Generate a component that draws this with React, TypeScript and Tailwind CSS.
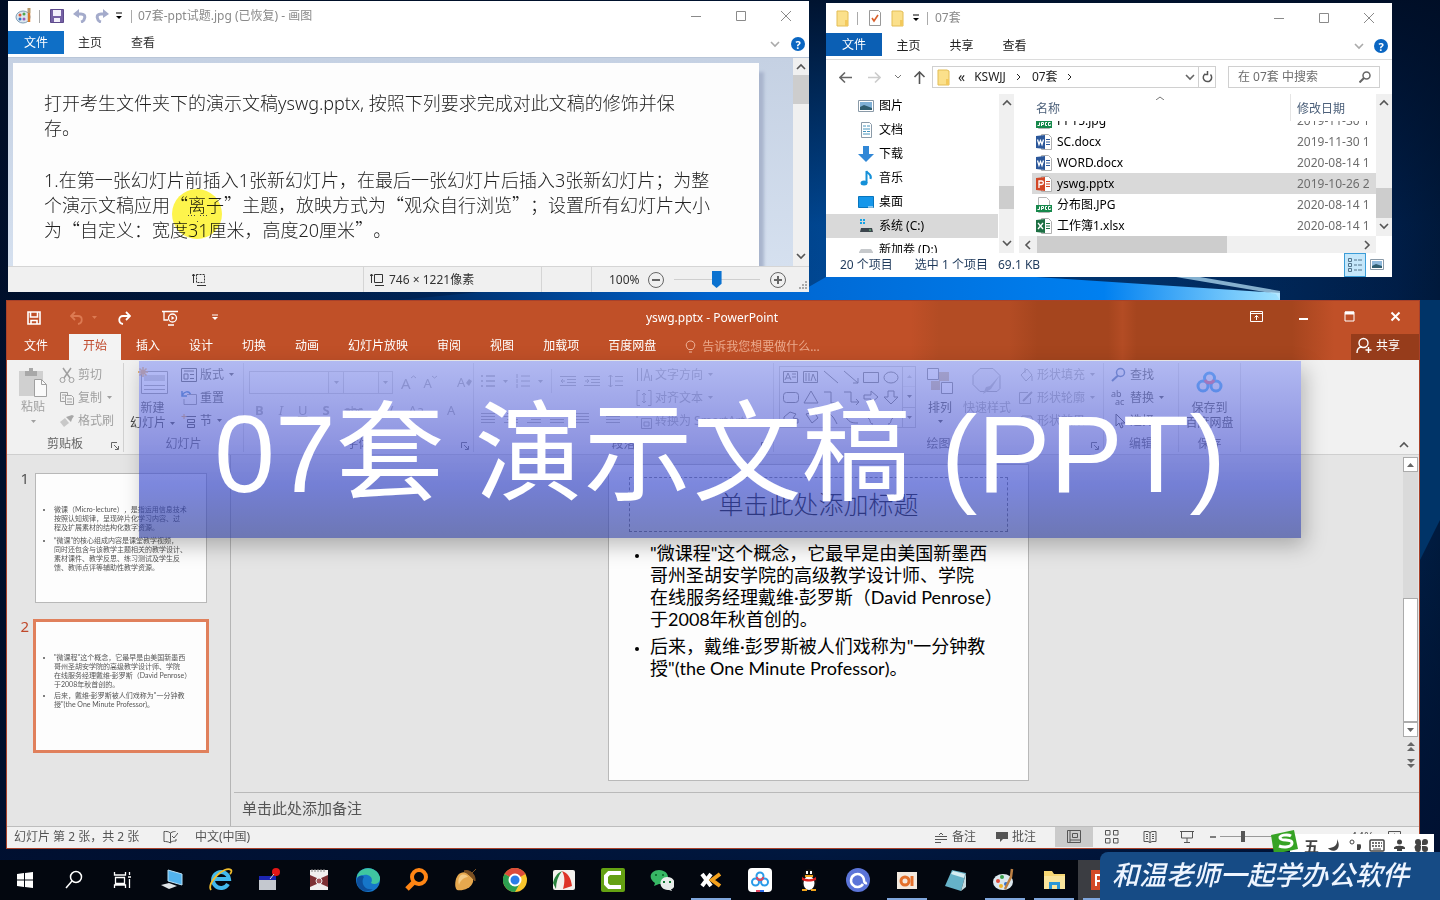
import { useState, type ReactNode } from "react";

const UI = "font-['Noto_Sans','Noto_Sans_CJK_SC',sans-serif]";

/* ---------- shared bits ---------- */

function Svg({ w = 16, h, box, children, className = "" }: { w?: number; h?: number; box?: string; children: ReactNode; className?: string }) {
    return (
        <svg width={w} height={h ?? w} viewBox={box ?? `0 0 ${w} ${h ?? w}`} fill="none" stroke="currentColor" className={`shrink-0 ${className}`} aria-hidden="true">
            {children}
        </svg>
    );
}

function Chevron({ dir = "down", className = "" }: { dir?: "up" | "down" | "left" | "right"; className?: string }) {
    const d = { up: "M1 6 5 2l4 4", down: "M1 3l4 4 4-4", left: "M7 1 3 5l4 4", right: "M3 1l4 4-4 4" }[dir];
    return <Svg w={10} className={className}><path d={d} strokeWidth="1.6" /></Svg>;
}

function Caret({ className = "" }: { className?: string }) {
    return <Svg w={5} h={3} className={className}><path d="M0 0h5L2.5 3z" fill="currentColor" stroke="none" /></Svg>;
}

function QuickMenu() {
    return <Svg w={8} h={8} className="text-black"><path d="M1 1h6" /><path d="M1 4h6L4 7z" fill="currentColor" stroke="none" /></Svg>;
}

function WindowButtons({ gap }: { gap: string }) {
    return (
        <div className={`flex items-center text-[#8a8a8a] ${gap}`}>
            <button type="button" aria-label="最小化"><Svg w={12}><path d="M1 6.5h10" /></Svg></button>
            <button type="button" aria-label="最大化"><Svg w={12}><path d="M1.500 1.500h9v9h-9z" /></Svg></button>
            <button type="button" aria-label="关闭"><Svg w={12}><path d="M1 1l10 10M11 1 1 11" /></Svg></button>
        </div>
    );
}

function Help() {
    return <button type="button" aria-label="帮助" className="flex size-[14px] items-center justify-center rounded-full bg-[#0a66c2] text-[11px] font-bold leading-none text-white">?</button>;
}

function Folder({ w = 13 }: { w?: number }) {
    return (
        <Svg w={w} h={17} box="0 0 13 17">
            <path d="M1 1h9l2 1v14H1z" fill="#fbe08b" stroke="#e3bd55" />
            <path d="M9 10h3v6H9z" fill="#f3c95c" stroke="none" />
        </Svg>
    );
}

// full-width quotes need the CJK face
function CQ({ children }: { children: ReactNode }) {
    return <span className="font-['Noto_Sans_CJK_SC',sans-serif] leading-none">{children}</span>;
}

/* ---------- Paint ---------- */

function PaintWindow() {
    const [zoom, setZoom] = useState(50);
    return (
        <section className="absolute left-2 top-px flex h-[291px] w-[801px] flex-col bg-white text-xs text-[#333]">
            <header className="flex h-[30px] shrink-0 items-center pl-[7px] pr-[17px]">
                <Svg w={18}>
                    <ellipse cx="8" cy="10" rx="7" ry="6" fill="#dbe6ee" stroke="#7d9cb5" />
                    <circle cx="5" cy="8" r="1.500" fill="#e05a3a" stroke="none" /><circle cx="9" cy="7" r="1.500" fill="#4fa64a" stroke="none" />
                    <circle cx="5" cy="12" r="1.500" fill="#3577c8" stroke="none" /><circle cx="9" cy="12" r="1.500" fill="#9d5bb5" stroke="none" />
                    <path d="M14 6v9" stroke="#d97b2b" strokeWidth="2.500" /><path d="M14 6V1" stroke="#b99a6d" strokeWidth="3" />
                </Svg>
                <span className="ml-[6px] h-[13px] w-px bg-[#aaa]" />
                <button type="button" aria-label="保存" className="ml-[10px]">
                    <Svg w={14}><path d="M.5.5h13v13H.5z" fill="#7561a4" stroke="#5d4a8c" /><path d="M3 1h8v6H3zM4 9h6v4H4z" fill="#f2effa" stroke="none" /></Svg>
                </button>
                <button type="button" aria-label="撤消" className="ml-[9px] text-[#a4abcb]"><Svg w={14}><path d="M3 5h5c6 0 4 7 0 8" strokeWidth="3" /><path d="M6 0v9L0 5z" fill="currentColor" stroke="none" /></Svg></button>
                <button type="button" aria-label="重做" className="ml-2 text-[#a4abcb]"><Svg w={14}><path d="M11 5H6c-6 0-4 7 0 8" strokeWidth="3" /><path d="M8 0v9l6-4z" fill="currentColor" stroke="none" /></Svg></button>
                <span className="ml-[6px]"><QuickMenu /></span>
                <span className="ml-2 mr-[6px] h-[13px] w-px bg-[#aaa]" />
                <h1 className="text-[#8a8a8a]">07套-ppt试题.jpg (已恢复) - 画图</h1>
                <div className="ml-auto"><WindowButtons gap="gap-[33px]" /></div>
            </header>
            <nav className="flex h-[26px] shrink-0 items-start">
                <button type="button" className="h-[23px] w-14 bg-[#0f6fc6] text-white">文件</button>
                <button type="button" className="h-6 w-[52px]">主页</button>
                <button type="button" className="h-6 w-[54px]">查看</button>
                <div className="ml-auto flex h-[26px] items-center gap-[11px] pr-1">
                    <Chevron className="text-[#aaa]" /><Help />
                </div>
            </nav>
            <div className="flex min-h-0 flex-1 border-t border-[#b9c6d8]">
                <div className="flex flex-1 overflow-hidden bg-gradient-to-b from-[#c5d1e3] to-[#d5e0ef] pl-[5px] pt-[5px]">
                    <div className="relative w-[746px] bg-[#fdfdfd] px-[31px] pt-7 text-[18px] font-light leading-[25px] text-[#222] whitespace-nowrap shadow-[5px_9px_3px_#a9b5cd] [text-spacing-trim:space-all]">
                        <p>打开考生文件夹下的演示文稿yswg.pptx, 按照下列要求完成对此文稿的修饰并保</p>
                        <p>存。</p>
                        <p className="mt-[27px]">1.在第一张幻灯片前插入1张新幻灯片，在最后一张幻灯片后插入3张新幻灯片；为整</p>
                        <p>个演示文稿应用<CQ>“</CQ>离子<CQ>”</CQ>主题，放映方式为<CQ>“</CQ>观众自行浏览<CQ>”</CQ>；设置所有幻灯片大小</p>
                        <p>为<CQ>“</CQ>自定义：宽度31厘米，高度20厘米<CQ>”</CQ>。</p>
                        {/* pointer highlight */}
                        <span className="absolute left-[159px] top-[126px] size-[50px] rounded-full bg-[#fff200] opacity-70 mix-blend-multiply" />
                        <Svg w={19} h={22} className="absolute left-[175px] top-[141px] text-[#444]"><path d="M0 11.500h7m5 0h7M9.500 0v3m0 14v3" strokeDasharray="1 2" /></Svg>
                    </div>
                </div>
                <div className="flex w-4 flex-col items-center bg-[#f0f0f0] py-[5px] text-[#555]">
                    <Chevron dir="up" />
                    <span className="mt-0.5 h-[29px] w-full bg-[#cdcdcd]" />
                    <Chevron className="mt-auto" />
                </div>
            </div>
            <footer className="flex h-[26px] shrink-0 items-center border-t border-[#d5d5d5] bg-[#f0f0f0]">
                <div className="flex w-[355px] justify-center pl-[26px]">
                    <Svg w={14}><path d="M1.500 1v9M0 3l1.500-2L3 3M5 12.500h9" /><path d="M4.500 1.500h8v8h-8z" strokeDasharray="2 1" /></Svg>
                </div>
                <div className="flex h-full w-[179px] items-center gap-[5px] border-x border-[#d5d5d5] pl-[6px]">
                    <Svg w={14}><path d="M1.500 1v9M0 3l1.500-2L3 3M5 12.500h9M4.500 1.500h8v8h-8z" /></Svg>746 × 1221像素
                </div>
                <div className="h-full w-[50px] border-r border-[#d5d5d5]" />
                <span className="ml-[17px]">100%</span>
                <button type="button" aria-label="缩小" className="ml-2 text-[#666]"><Svg w={16}><circle cx="8" cy="8" r="7.500" /><path d="M4 8h8" strokeWidth="2" /></Svg></button>
                <input type="range" aria-label="缩放" value={zoom} onChange={e => setZoom(Number(e.target.value))} className="ml-[10px] h-[17px] w-[86px] appearance-none bg-[linear-gradient(#cfcfcf,#cfcfcf)] bg-[length:100%_1px] bg-center bg-no-repeat [&::-webkit-slider-thumb]:h-[17px] [&::-webkit-slider-thumb]:w-[10px] [&::-webkit-slider-thumb]:appearance-none [&::-webkit-slider-thumb]:bg-[#0b72d0] [&::-webkit-slider-thumb]:[clip-path:polygon(0_0,100%_0,100%_75%,50%_100%,0_75%)]" />
                <button type="button" aria-label="放大" className="ml-[10px] text-[#666]"><Svg w={16}><circle cx="8" cy="8" r="7.500" /><path d="M4 8h8M8 4v8" strokeWidth="2" /></Svg></button>
                <Svg w={9} className="ml-auto mr-0.5 mt-3 text-[#aaa]"><path d="M7 1h2M4 4h2m1 0h2M1 7h2m1 0h2m1 0h2" strokeWidth="2" /></Svg>
            </footer>
        </section>
    );
}

/* ---------- Explorer ---------- */

const places: { name: string; icon: ReactNode }[] = [
    { name: "图片", icon: <><path d="M.5 2.500h15v11H.5z" fill="#fff" stroke="#8a9aa8" /><path d="M2 4h12v8H2z" fill="#7fb0d6" stroke="none" /><path d="M2 12V9l4-2 8 3v2z" fill="#2f5d70" stroke="none" /></> },
    { name: "文档", icon: <><path d="M3.500.500h8l2 2v13h-10z" fill="#fff" stroke="#8a9aa8" /><path d="M5 4h3m1 0h3M5 7h7M5 9.500h3m1 0h3M5 12h7" stroke="#4694bd" /></> },
    { name: "下载", icon: <path d="M5 0h6v8h5l-8 8-8-8h5z" fill="#3187d6" stroke="none" /> },
    { name: "音乐", icon: <><path d="M8.500 13V1c1 3 6 3 4 8" stroke="#1590d8" strokeWidth="2" /><ellipse cx="6" cy="13" rx="3.500" ry="2.500" fill="#1590d8" stroke="none" /></> },
    { name: "桌面", icon: <><path d="M.5 2.500h15v11H.5z" fill="#1496ea" stroke="#0875bd" /><path d="M10 13h5" stroke="#fff" /></> },
    { name: "系统 (C:)", icon: <><path d="M2 1h2v2H2zM5 1h2v2H5zM2 4h2v2H2zM5 4h2v2H5z" fill="#16a3e5" stroke="none" /><path d="M3 10h11l1 4H2z" fill="#3c454d" stroke="none" /><path d="M11 12h2" stroke="#6fe08d" /></> },
    { name: "新加卷 (D:)", icon: <path d="M3 7h10l2 3v4H1v-4z" fill="#c6c9cc" stroke="none" /> },
];

type FileKind = "doc" | "ppt" | "jpg" | "xls";

const files: { name: string; date: string; kind: FileKind }[] = [
    { name: "PPT5.jpg", date: "2019-11-30 1", kind: "jpg" },
    { name: "SC.docx", date: "2019-11-30 1", kind: "doc" },
    { name: "WORD.docx", date: "2020-08-14 1", kind: "doc" },
    { name: "yswg.pptx", date: "2019-10-26 2", kind: "ppt" },
    { name: "分布图.JPG", date: "2020-08-14 1", kind: "jpg" },
    { name: "工作簿1.xlsx", date: "2020-08-14 1", kind: "xls" },
];

function FileIcon({ kind }: { kind: FileKind }) {
    if (kind === "jpg") {
        return <Svg w={16}><path d="M2.500.500h8l3 3v12h-11z" fill="#fff" stroke="#b5b5b5" /><path d="M0 8h16v7H0z" fill="#16884b" stroke="none" /><path d="M3.500 9.500v3H1.500M5.500 13V9.500h2v2h-2M11 9.500H9.500v3H11m3.500-3h-2v3h2v-1" stroke="#fff" /></Svg>;
    }
    const color = { doc: "#2b579a", ppt: "#d24726", xls: "#1d7044" }[kind];
    const mark = { doc: "M1.500 5.500l1.500 5 1.500-4 1.500 4 1.500-5", ppt: "M3 12V5h2.500c2.500 0 2.500 3.500 0 3.500H3", xls: "M2 5l5 6M7 5l-5 6" }[kind];
    return (
        <Svg w={16}>
            <path d="M5.500.500h7l3 3v12h-10z" fill="#fff" stroke="#b0b0b0" />
            <path d="M10 5.500h4M10 8h4m-4 2.500h4" stroke={color} />
            <path d="M0 2l9-1v14l-9-1z" fill={color} stroke="none" /><path d={mark} stroke="#fff" strokeWidth="1.300" />
        </Svg>
    );
}

function ExplorerWindow() {
    const [query, setQuery] = useState("");
    return (
        <section className="absolute left-[826px] top-[3px] flex h-[274px] w-[566px] flex-col bg-white text-xs text-[#222]">
            <header className="flex h-[30px] shrink-0 items-center pl-[10px] pr-[17px]">
                <Folder />
                <span className="ml-2 mr-[11px] h-[13px] w-px bg-[#aaa]" />
                <Svg w={12} h={16}><path d="M.5.500h9l2 2v13H.5z" fill="#fff" stroke="#999" /><path d="M3 8l2 3 4-6" stroke="#d9602b" strokeWidth="1.600" /></Svg>
                <span className="ml-[10px] mr-2"><Folder /></span>
                <QuickMenu />
                <span className="mx-[7px] h-[13px] w-px bg-[#aaa]" />
                <h1 className="text-[#8a8a8a]">07套</h1>
                <div className="ml-auto"><WindowButtons gap="gap-[33px]" /></div>
            </header>
            <nav className="flex h-[27px] shrink-0 items-start border-b border-[#dcdcdc]">
                <button type="button" className="h-[23px] w-14 bg-[#0b5fb4] text-white">文件</button>
                <button type="button" className="h-[25px] w-[53px]">主页</button>
                <button type="button" className="h-[25px] w-[53px]">共享</button>
                <button type="button" className="h-[25px] w-[53px]">查看</button>
                <div className="ml-auto flex h-[26px] items-center gap-[10px] pr-1">
                    <Chevron className="text-[#aaa]" /><Help />
                </div>
            </nav>
            <div className="flex shrink-0 items-center py-[6px] pl-[13px] pr-3">
                <button type="button" aria-label="后退"><Svg w={13} className="text-[#666]"><path d="M13 6.500H1.500M6 1.500l-5 5 5 5" strokeWidth="1.600" /></Svg></button>
                <button type="button" aria-label="前进" className="ml-4"><Svg w={13} className="text-[#ccc]"><path d="M0 6.500h11.500M7 1.500l5 5-5 5" strokeWidth="1.600" /></Svg></button>
                <Svg w={6} className="ml-[14px] text-[#777]"><path d="M0 1l3 3 3-3" /></Svg>
                <button type="button" aria-label="向上" className="ml-3"><Svg w={13} className="text-[#555]"><path d="M6.500 13V1.500M1.500 6l5-5 5 5" strokeWidth="1.600" /></Svg></button>
                <div className="ml-[6px] flex h-[22px] min-w-0 flex-1 items-center border border-[#d0d0d0] pl-1">
                    <Folder />
                    <span className="ml-2 text-sm leading-none">«</span>
                    <a href="#kswjj" className="ml-[9px]">KSWJJ</a>
                    <Svg w={6} className="mx-[10px]"><path d="M1 0l3 3-3 3" /></Svg>
                    <a href="#07">07套</a>
                    <Svg w={6} className="ml-[9px]"><path d="M1 0l3 3-3 3" /></Svg>
                    <Chevron className="ml-auto text-[#666]" />
                    <button type="button" aria-label="刷新" className="ml-[3px] flex h-full w-[17px] items-center justify-center border-l border-[#d0d0d0] text-[#555]">
                        <Svg w={11} h={12}><path d="M3 3a4.200 4.200 0 1 0 5.500.500" strokeWidth="1.500" /><path d="M3.500 0v3.500H0" strokeWidth="1.500" transform="translate(2)" /></Svg>
                    </button>
                </div>
                <label className="ml-3 flex h-[22px] w-[152px] items-center border border-[#d0d0d0] pl-[9px] pr-2">
                    <input value={query} onChange={e => setQuery(e.target.value)} placeholder="在 07套 中搜索" aria-label="搜索" className="w-full min-w-0 bg-transparent outline-none placeholder:text-[#6d6d6d]" />
                    <Svg w={12} className="text-[#666]"><circle cx="7.500" cy="4.500" r="3.500" strokeWidth="1.500" /><path d="M5 7 .5 11.500" strokeWidth="2" /></Svg>
                </label>
            </div>
            <div className="flex min-h-0 flex-1">
                <ul className="min-w-0 flex-1 overflow-hidden text-black">
                    {places.map(p => (
                        <li key={p.name}>
                            <button type="button" className={`flex h-6 w-full items-center gap-[5px] pl-8 ${p.name.includes("C:") ? "bg-[#d9d9d9]" : ""}`}>
                                <Svg w={16}>{p.icon}</Svg>{p.name}
                            </button>
                        </li>
                    ))}
                </ul>
                <div className="ml-px flex w-[15px] flex-col items-center bg-[#f0f0f0] py-[5px] text-[#555]">
                    <Chevron dir="up" />
                    <span className="mt-[77px] h-[23px] w-full bg-[#cdcdcd]" />
                    <Chevron className="mt-auto" />
                </div>
                <div className="ml-[5px] flex w-[373px] flex-col">
                    <div className="flex min-h-0 flex-1">
                        <div className="flex min-w-0 flex-1 flex-col pl-[13px]">
                            <div className="relative flex h-[27px] shrink-0 items-center text-[#4c607a]">
                                <button type="button" className="h-full flex-1 border-r border-[#e5e5e5] pl-1 pt-[2px] text-left">名称</button>
                                <button type="button" className="h-full w-[85px] pl-[6px] pt-[2px] text-left">修改日期</button>
                                <Svg w={8} h={4} className="absolute left-[124px] top-[2px] text-[#777]"><path d="M0 4l4-3 4 3" /></Svg>
                            </div>
                            <div className="flex min-h-0 flex-1 flex-col justify-end overflow-hidden">
                                <table className="w-full table-fixed border-collapse">
                                    <tbody>
                                        {files.map(f => (
                                            <tr key={f.name} className={`h-[21px] ${f.kind === "ppt" ? "bg-[#d9d9d9]" : ""}`}>
                                                <td className="p-0 pl-1 text-black"><span className="flex items-center gap-[5px]"><FileIcon kind={f.kind} />{f.name}</span></td>
                                                <td className="w-[79px] overflow-hidden p-0 whitespace-nowrap text-[#6d6d6d]">{f.date}</td>
                                            </tr>
                                        ))}
                                    </tbody>
                                </table>
                            </div>
                        </div>
                        <div className="flex w-4 flex-col items-center bg-[#f0f0f0] py-[5px] text-[#555]">
                            <Chevron dir="up" />
                            <span className="mb-[3px] mt-auto h-[30px] w-full bg-[#cdcdcd]" />
                            <Chevron />
                        </div>
                    </div>
                    <div className="mr-4 flex h-[17px] shrink-0 items-center bg-[#f0f0f0] px-1 text-[#555]">
                        <Chevron dir="left" /><span className="ml-1 h-full w-[190px] bg-[#cdcdcd]" /><Chevron dir="right" className="ml-auto" />
                    </div>
                </div>
            </div>
            <footer className="flex h-6 shrink-0 items-center pl-[14px] pr-2 text-[#1e395b]">
                <span>20 个项目</span>
                <span className="ml-[22px]">选中 1 个项目</span>
                <span className="ml-[10px]">69.1 KB</span>
                <button type="button" aria-label="详细信息" className="ml-auto flex h-6 w-[22px] items-center justify-center border border-[#3b9dd8] bg-[#c5e7fa]">
                    <Svg w={16}><path d="M1.500 1.500h3v3h-3zM1.500 6.500h3v3h-3zM1.500 11.500h3v3h-3zM7 3h3m1 0h4M7 8h3m1 0h4m-8 5h3m1 0h4" stroke="#52738a" /></Svg>
                </button>
                <button type="button" aria-label="大图标" className="ml-1">
                    <Svg w={14}><path d="M.5 1.500h13v10H.5z" fill="#fff" stroke="#8a9aa8" /><path d="M2 3h10v7H2z" fill="#8fb9dc" stroke="none" /><path d="M2 10V8l4-2 6 2v2z" fill="#2f5d70" stroke="none" /></Svg>
                </button>
            </footer>
        </section>
    );
}

/* ---------- PowerPoint ---------- */

const tabs = ["开始", "插入", "设计", "切换", "动画", "幻灯片放映", "审阅", "视图", "加载项", "百度网盘"];

function RibbonGroup({ label, width, launcher, children }: { label: string; width: string; launcher?: boolean; children: ReactNode }) {
    return (
        <div className={`flex h-[89px] shrink-0 flex-col border-r border-[#d2d2d2] ${width}`}>
            <div className="flex flex-1">{children}</div>
            <div className="relative h-[19px] text-center leading-[22px] text-[#666]">
                {label}
                {launcher && <Svg w={8} className="absolute bottom-0.5 right-1"><path d="M.5 6V.500H6M3 3l4 4M7.500 4v3.500H4" /></Svg>}
            </div>
        </div>
    );
}

function SmallCmd({ icon, children, menu, active }: { icon: ReactNode; children: ReactNode; menu?: boolean; active?: boolean }) {
    return (
        <button type="button" className={`flex h-[23px] items-center gap-[3px] whitespace-nowrap ${active ? "text-[#444]" : "text-[#a0a0a0]"}`}>
            <Svg w={16}>{icon}</Svg>{children}{menu && <Caret className="ml-0.5" />}
        </button>
    );
}

function Lines({ w = 14, indent = 0 }: { w?: number; indent?: number }) {
    return <Svg w={w} h={12}><path d={`M${indent} 1.500h${w - indent}M0 4.500h${w}M${indent} 7.500h${w - indent}M0 10.500h${w}`} /></Svg>;
}

function Ribbon() {
    const box = "h-[23px] appearance-none border border-[#c6c6c6] bg-[#f4f4f4]";
    return (
        <div className="flex h-[95px] shrink-0 overflow-hidden border-b border-[#cfcfcf] bg-[#f1f1f1] pt-[3px] text-xs text-[#a0a0a0]">
            <RibbonGroup label="剪贴板" width="w-[117px]" launcher>
                <button type="button" className="flex w-[52px] flex-col items-center pt-1">
                    <Svg w={28} h={31}>
                        <path d="M0 4h24v25H0z" fill="#d0d0d0" stroke="none" /><path d="M6 4h12v5H6zM10 1h4v4h-4z" fill="#a8a8a8" stroke="none" />
                        <path d="M15.500 12.500h7l5 5v12h-12z" fill="#fafafa" /><path d="M22.500 12.500v5h5" />
                    </Svg>
                    <span className="leading-[18px]">粘贴</span><Caret className="mt-1" />
                </button>
                <div className="flex flex-col">
                    <SmallCmd icon={<><path d="M4 1l7 10M12 1 5 11" strokeWidth="1.500" /><circle cx="3.500" cy="13" r="2.500" /><circle cx="12.500" cy="13" r="2.500" /></>}>剪切</SmallCmd>
                    <SmallCmd menu icon={<><path d="M1.500 2.500h7v9h-7zM3 5h4M3 8h2" /><path d="M6.500 5.500h6l2 2v7h-8z" fill="#f1f1f1" /><path d="M8 9h5m-5 3h5" /></>}>复制</SmallCmd>
                    <SmallCmd icon={<><path d="M1 9l5-4 4 5-5 4z" fill="#c8c8c8" stroke="none" /><path d="M7 4l5 5 1-3 2-3-2-1-3 1z" fill="#a8a8a8" stroke="none" /></>}>格式刷</SmallCmd>
                </div>
            </RibbonGroup>
            <RibbonGroup label="幻灯片" width="w-[120px]">
                <button type="button" className="flex w-[57px] flex-col items-center pt-1 text-[#444]">
                    <Svg w={30} h={29}>
                        <path d="M3.500 4.500h26v22h-26z" fill="#fff" stroke="#888" /><path d="M6 8h21v6H6z" fill="#ccc" stroke="none" /><path d="M6 18.500h21M6 22.500h21" stroke="#999" />
                        <path d="M5 0v10M0 5h10M1.500 1.500l7 7m0-7-7 7" stroke="#e2a04d" strokeWidth="1.500" />
                    </Svg>
                    <span className="pt-1 leading-4">新建</span>
                    <span className="flex items-center gap-1 leading-[14px] whitespace-nowrap">幻灯片<Caret /></span>
                </button>
                <div className="flex flex-col">
                    <SmallCmd active menu icon={<><path d="M.500 1.500h15v13H.5z" /><path d="M3 4h10M3 7h4v5H3zM9 7.500h4M9 11.500h4" /></>}>版式</SmallCmd>
                    <SmallCmd active icon={<><path d="M6 4.500h9.500v10H3V9" stroke="#888" /><path d="M1 1v5h5M1.500 5c2-4 6-4 8-1" stroke="#2f73b8" strokeWidth="1.500" /></>}>重置</SmallCmd>
                    <SmallCmd active menu icon={<><path d="M5 3.500h10M6.500 6.500h7v3h-7zM6.500 11.500h7v3h-7z" /><path d="M3 1v5M.500 3.500h5" stroke="#e2a04d" /></>}>节</SmallCmd>
                </div>
            </RibbonGroup>
            <RibbonGroup label="字体" width="w-[230px]" launcher>
                <div className="flex flex-col pl-[5px] pt-2">
                    <div className="flex items-center">
                        <span className="flex"><select aria-label="字体" disabled className={`w-[80px] ${box}`}><option> </option></select><span className="flex w-[14px] items-center justify-center border-y border-[#c6c6c6]"><Caret /></span></span>
                        <span className="flex"><select aria-label="字号" disabled className={`w-[36px] ${box}`}><option> </option></select><span className="flex w-[14px] items-center justify-center border-y border-r border-[#c6c6c6]"><Caret /></span></span>
                        <button type="button" aria-label="增大字号" className="ml-2 flex text-[15px] leading-4">A<Svg w={5} h={4}><path d="M0 3l2.500-2L5 3" /></Svg></button>
                        <button type="button" aria-label="减小字号" className="ml-2 flex text-[13px] leading-4">A<Svg w={5} h={4}><path d="M0 1l2.500 2L5 1" /></Svg></button>
                        <button type="button" aria-label="清除格式" className="ml-5 flex items-center text-[13px]">A<Svg w={7} h={9}><path d="M1 5l3-4 3 2-3 5z" fill="currentColor" stroke="none" /></Svg></button>
                    </div>
                    <div className="mt-2 flex items-center gap-[15px] pl-[6px] text-[13px]">
                        <button type="button" className="font-bold">B</button>
                        <button type="button" className="italic">I</button>
                        <button type="button" className="underline">U</button>
                        <button type="button" className="font-bold">S</button>
                        <button type="button" className="text-[11px] line-through">abc</button>
                        <button type="button">AV</button>
                        <button type="button">Aa</button>
                        <button type="button" className="ml-2">A</button>
                    </div>
                </div>
            </RibbonGroup>
            <RibbonGroup label="段落" width="w-[300px]" launcher>
                <div className="flex w-[162px] flex-col gap-[19px] pl-[7px] pt-[6px]">
                    <div className="flex items-center gap-2">
                        <Svg w={14} h={14}><path d="M0 2h2M5 2h9M0 7h2m3 0h9M0 12h2m3 0h9" strokeWidth="1.500" /></Svg><Caret />
                        <Svg w={14} h={14}><path d="M1 0v4m4-2h9M1 5v4m4-2h9M1 10v4m4-2h9" /></Svg><Caret />
                        <span className="h-6 w-px bg-[#d2d2d2]" />
                        <Svg w={16} h={12}><path d="M0 1.500h16M7 4.500h9M7 7.500h9M0 10.500h16M5 6H1m2-2L1 6l2 2" /></Svg>
                        <Svg w={16} h={12}><path d="M0 1.500h16M7 4.500h9M7 7.500h9M0 10.500h16M1 6h4M3 4l2 2-2 2" /></Svg>
                        <Svg w={15} h={14}><path d="M2.500 1v12M.500 3l2-2 2 2m-4 8 2 2 2-2M7 2.500h8M7 7h8m-8 4.500h8" /></Svg>
                    </div>
                    <div className="flex items-center gap-[9px]">
                        <Lines /><Lines indent={3} /><Lines indent={4} /><Lines /><Lines w={16} />
                        <span className="ml-2"><Lines /></span>
                    </div>
                </div>
                <div className="flex flex-col">
                    <SmallCmd menu icon={<path d="M1.500 1v13M5.500 1v13M8 14l3-12 3 12M9 10h4M15.500 8v6" />}>文字方向</SmallCmd>
                    <SmallCmd menu icon={<path d="M4 .5H1v15h3M12 .5h3v15h-3M8 3v10M6 5l2-2 2 2m-4 6 2 2 2-2" />}>对齐文本</SmallCmd>
                    <SmallCmd icon={<path d="M5.500 5.500h10v10h-10zM1 5V1h4M8 9h5v4H8z" />}>转换为 SmartArt</SmallCmd>
                </div>
            </RibbonGroup>
            <RibbonGroup label="绘图" width="w-[330px]" launcher>
                <div className="ml-[5px] mt-[3px] flex h-[62px] w-[137px] border border-[#c0c0c0] text-[#666]">
                    <Svg w={122} h={60} className="text-[#666]">
                        <path d="M3.500 4.500h14v11h-14zM5 13l3-7 3 7m-5-2h4m2-4h4m-4 3h4M23.500 4.500h14v11h-14zM26 6v8m3-8v8m2 0 2-7 3 7" />
                        <path d="M44 4l14 12M64 4l14 12m0-5v5h-5M83.500 5.500h15v10h-15z" /><ellipse cx="111" cy="10.500" rx="7" ry="5.500" />
                        <rect x="3.500" y="25.500" width="15" height="10" rx="3" /><path d="M31 24l-7 12h14zM44 25h7v11h7M64 25h7v10h8m-3-3 3 3-3 3M84 28h7v-4l7 6-7 6v-4h-7zM108 24h6v6h4l-7 7-7-7h4z" />
                        <path d="M4 56V50l6-5 6 2-3 4 5 1v4zM26 47l8-2 4 6-6 5zM44 46c7 0 9 3 13 11M64 46c4 10 8 10 14 10M93 45c-4 0-2 5-5 6 3 1 1 6 5 6M108 45c4 0 2 5 5 6-3 1-1 6-5 6" />
                    </Svg>
                    <div className="flex w-[14px] flex-col divide-y divide-[#c0c0c0] border-l border-[#c0c0c0]">
                        <span className="flex flex-1 items-center justify-center opacity-40"><Caret className="rotate-180" /></span>
                        <span className="flex flex-1 items-center justify-center"><Caret /></span>
                        <span className="flex flex-1 items-center justify-center"><Caret /></span>
                    </div>
                </div>
                <button type="button" className="ml-2 flex w-[32px] flex-col items-center pt-1 text-[#444]">
                    <Svg w={28} h={29}><path d="M13 5h10v9H13zM5 14h9v9H5z" fill="#c9b28a" stroke="none" /><path d="M1.500 1.500h11v11h-11zM15.500 15.500h11v11h-11z" fill="#fff" stroke="#777" /></Svg>
                    <span className="pt-1 leading-4 whitespace-nowrap">排列</span><Caret className="mt-1" />
                </button>
                <button type="button" className="flex w-[62px] flex-col items-center pt-1">
                    <Svg w={30} h={31}><path d="M8 1.500h13l7 7v13l-3 3H8l-7-7v-9z" fill="#ececec" /><path d="M28 8 19 22l-8 5 3-7 4-1z" fill="#b5b5b5" stroke="none" /></Svg>
                    <span className="pt-0.5 leading-4 whitespace-nowrap">快速样式</span>
                </button>
                <div className="flex flex-col">
                    <SmallCmd menu icon={<path d="M3 8l6-6 5 6-6 6zM14 9v5M7 1v5" />}>形状填充</SmallCmd>
                    <SmallCmd menu icon={<><path d="M10 2.500H1.500v11h11V8" /><path d="M5 11l9-9" strokeWidth="2" /></>}>形状轮廓</SmallCmd>
                    <SmallCmd menu icon={<path d="M4 3h9l2 4-6 7-7-5z" />}>形状效果</SmallCmd>
                </div>
            </RibbonGroup>
            <RibbonGroup label="编辑" width="w-[75px]">
                <div className="flex flex-col pl-[7px]">
                    <SmallCmd active icon={<><circle cx="9.500" cy="5.500" r="4" stroke="#4a6a9a" strokeWidth="1.500" /><path d="M7 8.500 1 14" stroke="#4a6a9a" strokeWidth="2" /></>}>查找</SmallCmd>
                    <SmallCmd active menu icon={<text x="0" y="7" fontSize="9" fill="#444" stroke="none">ab<tspan x="4" y="15">ac</tspan></text>}>替换</SmallCmd>
                    <SmallCmd active icon={<path d="M5 1v12l3-3 2 5 2-1-2-4h4z" />}>选择</SmallCmd>
                </div>
            </RibbonGroup>
            <RibbonGroup label="保存" width="w-[62px]">
                <button type="button" className="flex w-full flex-col items-center pt-[8px] text-[#444]">
                    <Svg w={27} h={23}>
                        <circle cx="7" cy="15" r="5" stroke="#2b9be8" strokeWidth="3" /><circle cx="20" cy="15" r="5" stroke="#2b9be8" strokeWidth="3" /><circle cx="13.500" cy="7" r="5" stroke="#2b9be8" strokeWidth="3" />
                        <path d="M9 9a5 5 0 0 0 9 0" stroke="#e0506a" strokeWidth="3" />
                    </Svg>
                    <span className="pt-[6px] leading-[15px] whitespace-nowrap">保存到<br />百度网盘</span>
                </button>
            </RibbonGroup>
            <button type="button" aria-label="折叠功能区" className="mb-[3px] ml-auto mr-[10px] self-end text-[#555]"><Chevron dir="up" /></button>
        </div>
    );
}

function Slide2Body() {
    return (
        <>
            <li>
                <p>"微课程"这个概念，它最早是由美国新墨西</p>
                <p>哥州圣胡安学院的高级教学设计师、学院</p>
                <p>在线服务经理戴维·彭罗斯（David Penrose）</p>
                <p>于2008年秋首创的。</p>
            </li>
            <li>
                <p>后来，戴维·彭罗斯被人们戏称为"一分钟教</p>
                <p>授"(the One Minute Professor)。</p>
            </li>
        </>
    );
}

function Thumbnails() {
    const list = "list-disc pl-[18px] pr-2 font-['Lato','Noto_Sans_CJK_SC',sans-serif] text-[7px] leading-[9px] whitespace-nowrap text-[#555] [text-spacing-trim:space-all]";
    return (
        <aside className="flex w-[224px] shrink-0 flex-col border-r border-[#b5b5b5] pt-[18px]">
            <div className="flex">
                <span className="w-7 pr-[6px] text-right text-[15px] leading-[10px] text-[#555]">1</span>
                <button type="button" aria-label="幻灯片 1" className="h-[130px] w-[172px] border border-[#b8b8b8] bg-[#fdfdfd] text-left">
                    <ul className={`space-y-1 ${list}`}>
                        <li>
                            <p>微课（Micro-lecture），是指运用信息技术</p>
                            <p>按照认知规律，呈现碎片化学习内容、过</p>
                            <p>程及扩展素材的结构化数字资源。</p>
                        </li>
                        <li>
                            <p>“微课”的核心组成内容是课堂教学视频，</p>
                            <p>同时还包含与该教学主题相关的教学设计、</p>
                            <p>素材课件、教学反思、练习测试及学生反</p>
                            <p>馈、教师点评等辅助性教学资源。</p>
                        </li>
                    </ul>
                </button>
            </div>
            <div className="mt-4 flex">
                <span className="w-[26px] pr-1 text-right text-[15px] leading-[14px] text-[#c0492b]">2</span>
                <button type="button" aria-label="幻灯片 2" className="h-[134px] w-[176px] border-[3px] border-[#e0805c] bg-[#fdfdfd] pb-[10px] text-left">
                    <ul className={`space-y-0.5 ${list}`}><Slide2Body /></ul>
                </button>
            </div>
        </aside>
    );
}

function Editor() {
    return (
        <div className="flex min-w-0 flex-1 flex-col pl-[3px]">
            <div className="flex min-h-0 flex-1 border-b border-[#b9b9b9] pr-px">
                <div className="flex flex-1 justify-center overflow-hidden pt-[9px]">
                    <article className="h-[317px] w-[421px] border border-[#b9b9b9] bg-[#fdfdfd] px-5 pt-3">
                        <h2 className="flex h-[55px] items-center justify-center border border-dashed border-[#888] text-[25px] font-light text-[#222]">单击此处添加标题</h2>
                        <ul className="mt-[10px] list-disc pl-[21px] font-['Lato','Noto_Sans_CJK_SC',sans-serif] text-[18px] leading-[22px] font-normal whitespace-nowrap text-black marker:text-[12px] [&>li]:mb-[5px]">
                            <Slide2Body />
                        </ul>
                    </article>
                </div>
                <div className="flex w-[15px] flex-col items-center pt-[2px] text-[#666]">
                    <button type="button" aria-label="向上滚动" className="flex h-[15px] w-full items-center justify-center border border-[#ababab] bg-white"><Svg w={7} h={4}><path d="M0 4h7L3.500 0z" fill="currentColor" stroke="none" /></Svg></button>
                    <div className="flex w-full flex-1 flex-col justify-end bg-[#dadada]"><span className="h-[124px] border border-[#ababab] bg-white" /></div>
                    <button type="button" aria-label="向下滚动" className="flex h-[15px] w-full items-center justify-center border border-[#ababab] bg-white"><Svg w={7} h={4}><path d="M0 0h7L3.500 4z" fill="currentColor" stroke="none" /></Svg></button>
                    <button type="button" aria-label="上一张幻灯片" className="mt-[5px]"><Svg w={8} h={9}><path d="M0 4h8L4 0zM0 9h8L4 5z" fill="currentColor" stroke="none" /></Svg></button>
                    <button type="button" aria-label="下一张幻灯片" className="mb-6 mt-2"><Svg w={8} h={9}><path d="M0 0h8L4 4zM0 5h8L4 9z" fill="currentColor" stroke="none" /></Svg></button>
                </div>
            </div>
            <p className="h-[33px] shrink-0 pl-2 text-[15px] leading-[31px] text-[#555]">单击此处添加备注</p>
        </div>
    );
}

function PowerPointWindow() {
    const [tab, setTab] = useState("开始");
    const [zoom, setZoom] = useState(22);
    return (
        <section className="absolute bottom-[51px] left-[6px] right-5 top-[300px] flex flex-col border border-[#a8412a] bg-[#e5e5e5] text-xs">
            <header className="shrink-0 bg-[#c05028] bg-[linear-gradient(90deg,transparent_64%,#b34c24_66%,#b34c24_71%,#a5451e_73%,#a5451e_78%,#b34c24_79%,#a5451e_80%,#a5451e_91%,transparent_94%)] text-white">
                <div className="grid h-[33px] grid-cols-[1fr_auto_1fr] items-center">
                    <div className="flex items-center pl-5">
                        <button type="button" aria-label="保存"><Svg w={14}><path d="M1 1h12v12H1zM3.500 1v5h7V1M4 13V9.500h6V13" strokeWidth="1.600" /></Svg></button>
                        <button type="button" aria-label="撤消" className="ml-[29px] text-[#dc7a52]"><Svg w={14}><path d="M5 1 1 5l4 4M1 5h7c5 0 5 7 0 8" strokeWidth="1.800" /></Svg></button>
                        <Caret className="ml-2 text-[#dc7a52]" />
                        <button type="button" aria-label="重做" className="ml-5"><Svg w={14}><path d="M9 1l4 4-4 4M13 5H6c-5 0-5 7 0 8" strokeWidth="1.800" /></Svg></button>
                        <button type="button" aria-label="从头开始放映" className="ml-[31px]"><Svg w={17} h={16}><path d="M0 1.500h16M2 2v8h4M6 15h6" strokeWidth="1.300" /><circle cx="10.500" cy="8" r="4" strokeWidth="1.300" /><path d="M9.500 6v4l3-2z" fill="currentColor" stroke="none" /></Svg></button>
                        <Svg w={6} h={7} className="ml-[33px]"><path d="M0 1h6" /><path d="M0 3h6L3 6z" fill="currentColor" stroke="none" /></Svg>
                    </div>
                    <h1 className="pr-[2px]">yswg.pptx - PowerPoint</h1>
                    <div className="flex items-center justify-end gap-[35px] pb-[2px] pr-[18px]">
                        <button type="button" aria-label="功能区显示选项"><Svg w={13} h={11}><path d="M.5.500h12v10H.500zM.500 2.500h12M6.500 9V4.500M4.500 6.500l2-2 2 2" /></Svg></button>
                        <button type="button" aria-label="最小化"><Svg w={11} h={11}><path d="M1 8h9" strokeWidth="2" /></Svg></button>
                        <button type="button" aria-label="最大化"><Svg w={11} h={11}><path d="M1 2h9" strokeWidth="3" /><path d="M1 1h9v9H1z" /></Svg></button>
                        <button type="button" aria-label="关闭"><Svg w={11} h={11}><path d="M1.500 1.500l8 8m0-8-8 8" strokeWidth="2" /></Svg></button>
                    </div>
                </div>
                <nav className="flex h-[26px]">
                    <button type="button" className="w-[58px] pb-[2px]">文件</button>
                    <span className="w-1" />
                    {tabs.map(t => (
                        <button key={t} type="button" onClick={() => setTab(t)} className={`mr-px px-[14px] pb-[2px] ${t === tab ? "bg-[#f3f3f3] text-[#c0492b]" : ""}`}>{t}</button>
                    ))}
                    <label className="ml-[14px] flex items-center gap-[6px] text-[#f0b8a0]">
                        <Svg w={11} h={14}><path d="M3.500 9.500C-1 5 2 1 5.500 1S12 5 7.500 9.500zM4 12h3" /></Svg>
                        <input placeholder="告诉我您想要做什么..." className="w-32 bg-transparent outline-none placeholder:text-[#eba98c]" />
                    </label>
                    <button type="button" className="ml-auto flex w-[68px] items-center gap-[4px] bg-[#963c1b] pb-[3px] pl-[5px]">
                        <Svg w={16} h={17}><circle cx="7.500" cy="6" r="4.500" strokeWidth="1.400" /><path d="M1 16c0-4 2-6 5-6M12.500 10v6m-3-3h6" strokeWidth="1.400" /></Svg>共享
                    </button>
                </nav>
            </header>
            <Ribbon />
            <div className="flex min-h-0 flex-1"><Thumbnails /><Editor /></div>
            <footer className="flex h-[22px] shrink-0 items-center border-t border-[#bdbdbd] bg-[#f1f1f1] pb-[2px] pl-[7px] text-[#555]">
                <span className="w-[130px]">幻灯片 第 2 张，共 2 张</span>
                <Svg w={15} h={14} className="ml-[19px]"><path d="M7.500 3v10M7.500 3C5 1 3 1.500 1 1.500v10c2 0 4 0 6.500 1.500M7.500 3c2-1.500 4-1.500 5-1.500M8 12c2-1 3-1 5-1V9M9 6l2 2 4-5" /></Svg>
                <span className="ml-[17px]">中文(中国)</span>
                <div className="ml-auto flex items-center">
                    <button type="button" className="flex items-center gap-[5px]"><Svg w={12}><path d="M0 5.500h12M0 8.500h12M0 11.500h6M4 4l2-2 2 2" /></Svg>备注</button>
                    <button type="button" className="ml-5 flex items-center gap-1"><Svg w={12}><path d="M0 1h12v7H7l-3 3V8H0z" fill="currentColor" stroke="none" /></Svg>批注</button>
                    <button type="button" aria-label="普通视图" className="ml-[19px] flex h-[20px] w-[38px] items-center justify-center bg-[#cbcbcb]"><Svg w={14}><path d="M.5.500h13v12H.5zM3 .5v12M5.500 3.500h5v4h-5zM3 10h10" /></Svg></button>
                    <button type="button" aria-label="幻灯片浏览" className="flex w-[38px] justify-center"><Svg w={14}><path d="M.5.500h4.500v4.500H.5zM8.500.500h4.500v4.500H8.500zM.500 8.500h4.500V13H.5zM8.500 8.500h4.500V13H8.500z" /></Svg></button>
                    <button type="button" aria-label="阅读视图" className="flex w-[37px] justify-center"><Svg w={14}><path d="M7 2v11M1 1.500h4l2 1 2-1h4v10H9l-2 1-2-1H1zM3 4.500h2M3 6.500h2M3 8.500h2m4-4h2m-2 2h2m-2 2h2" /></Svg></button>
                    <button type="button" aria-label="幻灯片放映" className="flex w-[38px] justify-center"><Svg w={14}><path d="M0 1.500h14M1.500 2v6h11V2M7 8v4M4 12.500h6" /></Svg></button>
                    <button type="button" aria-label="缩小" className="ml-1"><Svg w={6}><path d="M0 3h6" strokeWidth="1.500" /></Svg></button>
                    <input type="range" aria-label="缩放" value={zoom} onChange={e => setZoom(Number(e.target.value))} className="ml-1 h-3 w-[100px] appearance-none bg-[linear-gradient(#999,#999)] bg-[length:100%_1px] bg-center bg-no-repeat [&::-webkit-slider-thumb]:h-[11px] [&::-webkit-slider-thumb]:w-1 [&::-webkit-slider-thumb]:appearance-none [&::-webkit-slider-thumb]:bg-[#555]" />
                    <button type="button" aria-label="放大" className="ml-1"><Svg w={6}><path d="M0 3h6M3 0v6" /></Svg></button>
                    <span className="ml-4 w-7 text-right">44%</span>
                    <button type="button" aria-label="适应窗口" className="ml-[14px] mr-[18px]"><Svg w={13} h={11}><path d="M.5.500h12v10H.5zM4 5l2.500-2L9 5" /></Svg></button>
                </div>
            </footer>
        </section>
    );
}

/* ---------- Taskbar ---------- */

const apps: { name: string; open?: boolean; icon: ReactNode }[] = [
    { name: "开始", icon: <path d="M4 6l7-1v6.500H4zM12 5l8-1v7.500h-8zM4 12.500h7V19l-7-1zM12 12.500h8V20l-8-1z" fill="#fff" stroke="none" /> },
    { name: "搜索", icon: <><circle cx="14" cy="9" r="5.500" stroke="#fff" strokeWidth="1.500" /><path d="M10 13l-6 7" stroke="#fff" strokeWidth="1.500" /></> },
    { name: "任务视图", icon: <path d="M3.500 4v3h11V4M4.500 9.500h9v6h-9zM3.500 20v-3h11v3M18.500 4v3m0 4v9M17 9h3" stroke="#fff" strokeWidth="1.300" /> },
    { name: "此电脑", icon: <><path d="M8 2l14 4v11L8 13z" fill="#52b3ee" stroke="#b9dff5" /><path d="M1 17l8-2 8 3-8 3z" fill="#dfe5e8" stroke="none" /></> },
    { name: "Internet Explorer", icon: <><path d="M19 16a8 8 0 1 1 1-5H6" stroke="#43b9ed" strokeWidth="4" /><path d="M2 22C-3 15 16-3 22 2c1 1 0 3-1 4" stroke="#f1bd2d" strokeWidth="1.800" /></> },
    { name: "便签", icon: <><path d="M1 8h17v14H1z" fill="#c4c8cf" stroke="none" /><path d="M1 8h17v4H1z" fill="#1b25b2" stroke="none" /><circle cx="18" cy="4" r="4" fill="#e31616" stroke="none" /><path d="M16 6l-4 5" stroke="#ddd" /></> },
    { name: "蝴蝶结", icon: <><path d="M3 2h18v20H3z" fill="#f1eeee" stroke="none" /><path d="M5 1v3m3-3v3m3-3v3m3-3v3m3-3v3" stroke="#888" /><path d="M3 7l9 4 9-4v12l-9-4-9 4z" fill="#7d2f33" stroke="none" /><circle cx="12" cy="13" r="3" fill="#a4555a" stroke="#eee" /></> },
    { name: "Microsoft Edge", icon: <><circle cx="12" cy="12" r="12" fill="#1676c9" stroke="none" /><path d="M1 8C4-2 20-3 24 9c1 7-6 8-9 6 3-5-2-9-7-8-3 0-5 1-7 3z" fill="#3fc6a0" stroke="none" /><path d="M8 9c-4 6 1 14 9 12-8 6-18-1-16-10 1-4 6-4 7-2z" fill="#0d4f9c" stroke="none" /></> },
    { name: "Everything", icon: <><circle cx="14" cy="9" r="7" stroke="#ff8514" strokeWidth="4" /><path d="M9 14l-7 7" stroke="#ff8514" strokeWidth="5" /></> },
    { name: "坚果云", icon: <><path d="M4 7C9 1 21 6 19 14c-2 7-11 9-16 8C0 19 1 11 4 7z" fill="#e6a84e" stroke="none" /><path d="M6 8c3-3 7-1 8 1-4 0-8 4-9 8-1-3-1-6 1-9z" fill="#f4cc88" stroke="none" /><path d="M10 3c5-2 12 3 11 10-3-4-7-7-11-10zM18 5l4-4" fill="#7a4f22" stroke="#7a4f22" /></> },
    { name: "Chrome", icon: <><circle cx="12" cy="12" r="12" fill="#f9c62c" stroke="none" /><path d="M12 12 1.600 6A12 12 0 0 1 22.400 6z" fill="#dd4b3b" stroke="none" /><path d="M12 12 1.600 6A12 12 0 0 0 12 24l5-9z" fill="#2c9f50" stroke="none" /><circle cx="12" cy="12" r="5.500" fill="#2b7de9" stroke="#fff" strokeWidth="2" /></> },
    { name: "截图工具", icon: <><rect x="1" y="2" width="22" height="20" rx="2" fill="#f3f1ed" stroke="none" /><path d="M10 3C5 5 2 10 1 15l3 6c0-7 2-13 6-18z" fill="#27813b" stroke="none" /><path d="M10 3c6 2 9 7 10 15l-9 3c2-7 2-13-1-18z" fill="#de3427" stroke="none" /></> },
    { name: "Camtasia", icon: <><rect width="24" height="24" rx="2" fill="#64a112" stroke="none" /><path d="M20 5H8L5 8v8l3 3h12" stroke="#fff" strokeWidth="4" /></> },
    { name: "微信", icon: <><path d="M9 2c12 0 12 15 0 14l-5 2 1-3C-3 10 1 2 9 2z" fill="#37b865" stroke="none" /><path d="M17 9c10 0 9 12 4 12l1 2-3-1c-11 1-11-13-2-13z" fill="#e8ecea" stroke="none" /><path d="M5 7h2m5 0h2M13 14h2m4 0h2" stroke="#173" strokeWidth="2" /></> },
    { name: "剪辑", open: true, icon: <><path d="M3 6l9 12M12 6 3 18" stroke="#fff" strokeWidth="4" /><path d="M21 6l-8 6 8 6" stroke="#f5a21d" strokeWidth="4" /></> },
    { name: "百度网盘", icon: <><rect width="24" height="24" rx="4" fill="#fff" stroke="none" /><circle cx="7.500" cy="14" r="3.500" stroke="#2b9be8" strokeWidth="2" /><circle cx="16.500" cy="14" r="3.500" stroke="#2b9be8" strokeWidth="2" /><circle cx="12" cy="8" r="3.500" stroke="#2b9be8" strokeWidth="2" /><path d="M9 9a3 3 0 0 0 6 0" stroke="#e14560" strokeWidth="2" /><path d="M8 23h4" stroke="#e14560" strokeWidth="2" /><path d="M12 23h4" stroke="#2b6be8" strokeWidth="2" /></> },
    { name: "QQ", icon: <><ellipse cx="12" cy="13" rx="8" ry="9" fill="#111" stroke="none" /><ellipse cx="12" cy="7" rx="6" ry="6" fill="#111" stroke="none" /><ellipse cx="12" cy="15" rx="5.500" ry="7" fill="#fff" stroke="none" /><path d="M10 3v3m4-3v3" stroke="#fff" strokeWidth="2" /><path d="M8 8h8M5 22h5m4 0h5" stroke="#f2a41c" strokeWidth="2" /><path d="M5 9c4 3 10 3 14 0v3c-5 2-9 2-14 0z" fill="#db1f1f" stroke="none" /></> },
    { name: "浏览器", icon: <><circle cx="12" cy="12" r="12" fill="#5b74d8" stroke="none" /><path d="M17 16a6.500 6.500 0 1 1 1-4c0 4 3 3 3 3" stroke="#fff" strokeWidth="2.500" /></> },
    { name: "录屏", open: true, icon: <><path d="M2 4h20v17H2z" fill="#f3e9df" stroke="none" /><circle cx="10" cy="13" r="4" stroke="#e4702c" strokeWidth="3" /><path d="M17 8v10" stroke="#e4702c" strokeWidth="3" /></> },
    { name: "记事本", icon: <><path d="M8 2l14 3-5 18L1 18z" fill="#65b2c8" stroke="none" /><path d="M9 3l12 3-1 4L7 6z" fill="#d6edf2" stroke="none" /><path d="M17 23l5-4V5z" fill="#c5dbe0" stroke="none" /></> },
    { name: "画图", open: true, icon: <><ellipse cx="10" cy="14" rx="10" ry="8" fill="#dce8ef" stroke="none" /><circle cx="5" cy="13" r="2" fill="#dd4b3b" stroke="none" /><circle cx="9" cy="9" r="2" fill="#3aa04d" stroke="none" /><circle cx="8" cy="18" r="2" fill="#f0b52c" stroke="none" /><circle cx="13" cy="16" r="2" fill="#3170cf" stroke="none" /><path d="M19 1l-1 8-6 12" stroke="#bd8044" strokeWidth="2.500" /></> },
    { name: "文件资源管理器", open: true, icon: <><path d="M2 3h8l2 3h11v15H2z" fill="#f7d774" stroke="none" /><path d="M2 8h21v13H2z" fill="#fae59c" stroke="none" /><path d="M7 21v-7h11v7h-3v-4h-5v4z" fill="#2b96d6" stroke="none" /></> },
    { name: "PowerPoint", open: true, icon: <><path d="M0 2h24v20H0z" fill="#d34a27" stroke="none" /><path d="M5 18V7h3c4.500 0 4.500 6 0 6H5" stroke="#fff" strokeWidth="2" /></> },
];

function Taskbar() {
    return (
        <nav aria-label="任务栏" className="absolute inset-x-0 bottom-0 flex h-10 bg-[#03070f]">
            {apps.map(a => (
                <button key={a.name} type="button" aria-label={a.name} className={`flex w-[49px] shrink-0 flex-col items-center pt-2 ${a.name === "PowerPoint" ? "bg-[#3b3d42]" : ""}`}>
                    <Svg w={24}>{a.icon}</Svg>
                    {a.open && <span className="mt-auto h-0.5 w-10 bg-[#7fa6dc]" />}
                </button>
            ))}
        </nav>
    );
}

function ImeBar() {
    return (
        <div className="absolute bottom-[45px] right-[6px] flex h-[21px] w-[144px] items-start justify-between bg-white pl-[14px] pr-[6px] text-[#444]">
            <Svg w={28} h={24} className="absolute -left-5 -top-1"><path d="M1 5 24 0l4 19-24 5z" fill="#36a324" stroke="none" /><path d="M21 6c-3-2-12-1-11 2 1 4 12 0 12 5 0 4-8 5-13 3" stroke="#fff" strokeWidth="3" /></Svg>
            <span className="text-[15px] font-bold leading-6">五</span>
            <Svg w={14} className="mt-1"><path d="M10 1c1 6-3 9-9 9 4 6 15 2 9-9z" fill="currentColor" stroke="none" /></Svg>
            <Svg w={12} className="mt-1"><circle cx="3" cy="4" r="2" /><path d="M8 7h3c1 3-1 5-3 6" fill="currentColor" strokeWidth="1.500" /></Svg>
            <Svg w={16} className="mt-1"><rect x="1" y="2" width="14" height="11" rx="1" strokeWidth="1.500" /><path d="M3 5h10M3 8h10" strokeDasharray="2 1" strokeWidth="1.500" /><path d="M4 11h8" /></Svg>
            <Svg w={13} className="mt-1"><circle cx="6.500" cy="4" r="2.500" fill="currentColor" stroke="none" /><path d="M1 10c0-3 11-3 11 0v1H9v3H4v-3H1z" fill="currentColor" stroke="none" /></Svg>
            <Svg w={14} className="mt-1"><path d="M1 4a3 3 0 1 1 6 0v3H4a3 3 0 0 1-3-3zM8 7V4a3 3 0 1 1 3 3zM1 11a3 3 0 0 1 6-3c0 5-1 6-3 6s-3-1-3-3zM8 8h3a3 3 0 1 1-3 3z" fill="currentColor" stroke="none" /></Svg>
        </div>
    );
}

function Wallpaper() {
    return (
        <svg className="absolute inset-0 size-full" viewBox="0 0 1440 900" preserveAspectRatio="none" aria-hidden="true">
            <defs>
                <linearGradient id="edge" x1="0" x2="1" y1="0" y2="0">
                    <stop offset="0" stopColor="#000f2b" /><stop offset=".3" stopColor="#00265a" /><stop offset=".57" stopColor="#004c9c" /><stop offset=".97" stopColor="#001f4a" /><stop offset="1" stopColor="#001a3d" />
                </linearGradient>
                <linearGradient id="glow" x1="0" x2="1" y1="0" y2="0">
                    <stop offset="0" stopColor="#00265a" /><stop offset=".35" stopColor="#0062cc" /><stop offset=".8" stopColor="#0080f0" /><stop offset="1" stopColor="#9fe2ff" />
                </linearGradient>
                <linearGradient id="dim" x1="0" x2="0" y1="0" y2="1">
                    <stop offset="0" stopColor="#000d24" stopOpacity=".9" /><stop offset=".25" stopColor="#000d24" stopOpacity=".1" /><stop offset=".6" stopColor="#000d24" stopOpacity="0" /><stop offset="1" stopColor="#001033" />
                </linearGradient>
            </defs>
            <path d="M0 0h1440v900H0z" fill="url(#edge)" />
            <path d="M0 0h1440v900H0z" fill="url(#dim)" />
            <path d="M400 300 480 292h320l26-15h210l244 16v10z" fill="url(#glow)" />
            <path d="M1200 277l80 14v9l-4-6-100-17z" fill="#bdeaff" opacity=".7" />
            <path d="M1420 300h20v220l-20 40z" fill="#003468" />
        </svg>
    );
}

export default function App() {
    return (
        <main lang="zh-CN" className={`relative h-screen min-h-[600px] w-full overflow-hidden bg-[#00102e] ${UI}`}>
            <Wallpaper />
            <PaintWindow />
            <ExplorerWindow />
            <PowerPointWindow />
            <div className="absolute inset-x-[139px] top-[361px] flex h-[177px] items-center justify-center bg-[linear-gradient(rgba(142,154,242,.64),rgba(88,98,216,.64)_45%,rgba(58,75,205,.66)_70%,rgba(47,62,155,.66))] shadow-[4px_8px_20px_rgba(0,0,0,.25)]">
                <h2 className="pt-[10px] font-['Liberation_Sans','Noto_Sans_CJK_SC',sans-serif] text-[109px] leading-none whitespace-nowrap text-white">07套 演示文稿 (PPT)</h2>
            </div>
            <Taskbar />
            <ImeBar />
            <div className="absolute bottom-0 right-0 flex h-12 w-[340px] items-center rounded-tl-lg bg-[#164b85] pb-[6px] pl-3">
                <p className="font-['Noto_Sans_CJK_SC',sans-serif] text-[27px] font-medium italic leading-none whitespace-nowrap text-[#eef5ff]">和温老师一起学办公软件</p>
            </div>
        </main>
    );
}
